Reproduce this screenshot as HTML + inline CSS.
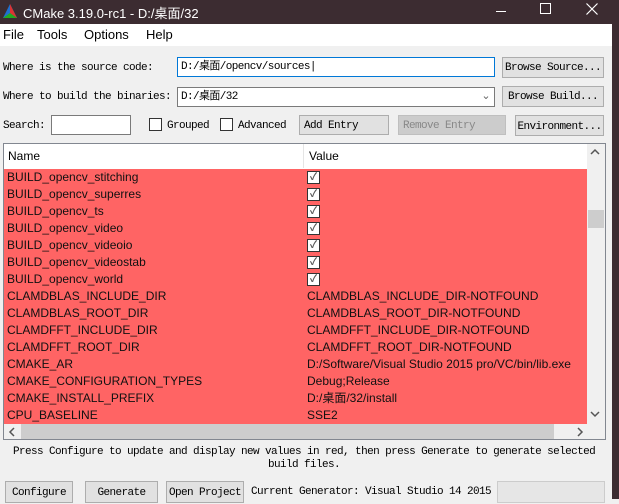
<!DOCTYPE html><html><head><meta charset="utf-8"><style>
*{margin:0;padding:0;box-sizing:border-box}
body{width:619px;height:499px;overflow:hidden;background:#f0f0f0;position:relative;font-family:"Liberation Sans","Noto Sans CJK SC",sans-serif}
.a{position:absolute}
.m{font-family:"Liberation Mono","Noto Sans CJK SC",monospace;font-size:11px;letter-spacing:-0.6px;white-space:nowrap}
.btn{position:absolute;background:#e1e1e1;border:1px solid #adadad;font-family:"Liberation Mono","Noto Sans CJK SC",monospace;font-size:11px;letter-spacing:-0.6px;text-align:center;line-height:20px;white-space:nowrap}
.inp{position:absolute;background:#fff;border:1px solid #7a7a7a;font-family:"Liberation Mono","Noto Sans CJK SC",monospace;font-size:11px;letter-spacing:-0.6px;padding-left:3px;line-height:18px;white-space:nowrap}
.row{position:absolute;left:4px;width:583px;height:17px;background:#ff6464;font-size:12px;line-height:17px;color:#111}
.row span{position:absolute;left:3px}
.row i{position:absolute;left:303px;font-style:normal}
.cb{position:absolute;left:303px;top:2px;width:13px;height:13px;border:1px solid #333;background:#fff;font-size:10px;line-height:11px;text-align:center;color:#555}
</style></head><body>
<div class="a" style="left:0;top:0;width:619px;height:24px;background:#3c2c31"></div>
<svg class="a" style="left:3px;top:4px" width="14" height="14"><polygon points="7,0 0,14 14,14" fill="#1f6fd0"/><polygon points="7,0 7,14 14,14" fill="#d33"/><polygon points="7,9 0,14 14,14" fill="#2a2"/></svg>
<div class="a" style="left:23px;top:3px;color:#fff;font-size:13px">CMake 3.19.0-rc1 - D:/桌面/32</div>
<div class="a" style="left:496px;top:11px;width:10px;height:1px;background:#fff"></div>
<div class="a" style="left:540px;top:3px;width:11px;height:11px;border:1px solid #fff"></div>
<svg class="a" style="left:586px;top:3px" width="12" height="12"><path d="M0.5 0.5L11.5 11.5M11.5 0.5L0.5 11.5" stroke="#fff" stroke-width="1.2"/></svg>
<div class="a" style="left:612px;top:0;width:7px;height:499px;background:#3c2c31"></div>
<div class="a" style="left:0;top:24px;width:612px;height:22px;background:#fff;font-size:13px;line-height:22px">
<span class="a" style="left:3px">File</span><span class="a" style="left:37px">Tools</span><span class="a" style="left:84px">Options</span><span class="a" style="left:146px">Help</span></div>
<div class="a m" style="left:3px;top:62px">Where is the source code:</div>
<div class="inp" style="left:177px;top:57px;width:318px;height:20px;border-color:#0078d7">D:/桌面/opencv/sources|</div>
<div class="btn" style="left:502px;top:57px;width:102px;height:21px">Browse Source...</div>
<div class="a m" style="left:3px;top:91px">Where to build the binaries:</div>
<div class="inp" style="left:177px;top:87px;width:318px;height:20px">D:/桌面/32<span style="position:absolute;right:4px;color:#666">⌄</span></div>
<div class="btn" style="left:502px;top:86px;width:102px;height:21px">Browse Build...</div>
<div class="a m" style="left:3px;top:120px">Search:</div>
<div class="inp" style="left:51px;top:115px;width:80px;height:20px"></div>
<div class="a" style="left:149px;top:118px;width:13px;height:13px;border:1px solid #333;background:#fff"></div>
<div class="a m" style="left:167px;top:120px">Grouped</div>
<div class="a" style="left:220px;top:118px;width:13px;height:13px;border:1px solid #333;background:#fff"></div>
<div class="a m" style="left:238px;top:120px">Advanced</div>
<div class="btn" style="left:299px;top:115px;width:90px;height:20px;text-align:left;padding-left:4px">Add Entry</div>
<div class="btn" style="left:398px;top:115px;width:108px;height:20px;background:#ccc;border-color:#bfbfbf;color:#888;text-align:left;padding-left:4px">Remove Entry</div>
<div class="btn" style="left:515px;top:115px;width:89px;height:21px;line-height:22px">Environment...</div>
<div class="a" style="left:3px;top:143px;width:603px;height:297px;border:1px solid #828790;background:#fff"></div>
<div class="a" style="left:4px;top:144px;width:583px;height:24px;font-size:12px;line-height:24px"><span style="margin-left:4px">Name</span><span style="position:absolute;left:299px;top:0;height:24px;border-left:1px solid #e5e5e5;padding-left:5px">Value</span></div>
<div class="a" style="left:587px;top:144px;width:18px;height:280px;background:#f0f0f0"></div>
<svg class="a" style="left:590px;top:148px" width="10" height="8"><path d="M1 6L5 2L9 6" stroke="#555" stroke-width="1.5" fill="none"/></svg>
<div class="a" style="left:588px;top:210px;width:16px;height:18px;background:#cdcdcd"></div>
<svg class="a" style="left:590px;top:410px" width="10" height="8"><path d="M1 2L5 6L9 2" stroke="#555" stroke-width="1.5" fill="none"/></svg>
<div class="a" style="left:4px;top:424px;width:601px;height:15px;background:#f0f0f0"></div>
<div class="a" style="left:21px;top:424px;width:533px;height:15px;background:#cdcdcd"></div>
<svg class="a" style="left:8px;top:427px" width="8" height="10"><path d="M6 1L2 5L6 9" stroke="#555" stroke-width="1.5" fill="none"/></svg>
<svg class="a" style="left:576px;top:427px" width="8" height="10"><path d="M2 1L6 5L2 9" stroke="#555" stroke-width="1.5" fill="none"/></svg>
<div class="row" style="top:169px"><span>BUILD_opencv_stitching</span><b class="cb">✓</b></div>
<div class="row" style="top:186px"><span>BUILD_opencv_superres</span><b class="cb">✓</b></div>
<div class="row" style="top:203px"><span>BUILD_opencv_ts</span><b class="cb">✓</b></div>
<div class="row" style="top:220px"><span>BUILD_opencv_video</span><b class="cb">✓</b></div>
<div class="row" style="top:237px"><span>BUILD_opencv_videoio</span><b class="cb">✓</b></div>
<div class="row" style="top:254px"><span>BUILD_opencv_videostab</span><b class="cb">✓</b></div>
<div class="row" style="top:271px"><span>BUILD_opencv_world</span><b class="cb">✓</b></div>
<div class="row" style="top:288px"><span>CLAMDBLAS_INCLUDE_DIR</span><i>CLAMDBLAS_INCLUDE_DIR-NOTFOUND</i></div>
<div class="row" style="top:305px"><span>CLAMDBLAS_ROOT_DIR</span><i>CLAMDBLAS_ROOT_DIR-NOTFOUND</i></div>
<div class="row" style="top:322px"><span>CLAMDFFT_INCLUDE_DIR</span><i>CLAMDFFT_INCLUDE_DIR-NOTFOUND</i></div>
<div class="row" style="top:339px"><span>CLAMDFFT_ROOT_DIR</span><i>CLAMDFFT_ROOT_DIR-NOTFOUND</i></div>
<div class="row" style="top:356px;overflow:hidden"><span>CMAKE_AR</span><i style="white-space:nowrap">D:/Software/Visual Studio 2015 pro/VC/bin/lib.exe</i></div>
<div class="row" style="top:373px"><span>CMAKE_CONFIGURATION_TYPES</span><i>Debug;Release</i></div>
<div class="row" style="top:390px"><span>CMAKE_INSTALL_PREFIX</span><i>D:/桌面/32/install</i></div>
<div class="row" style="top:407px"><span>CPU_BASELINE</span><i>SSE2</i></div>
<div class="a m" style="left:13px;top:446px">Press Configure to update and display new values in red, then press Generate to generate selected</div>
<div class="a m" style="left:268px;top:459px">build files.</div>
<div class="btn" style="left:5px;top:481px;width:68px;height:22px;line-height:22px">Configure</div>
<div class="btn" style="left:85px;top:481px;width:73px;height:22px;line-height:22px">Generate</div>
<div class="btn" style="left:166px;top:481px;width:78px;height:22px;line-height:22px">Open Project</div>
<div class="a m" style="left:251px;top:486px">Current Generator: Visual Studio 14 2015</div>
<div class="a" style="left:497px;top:481px;width:108px;height:22px;border:1px solid #ccc;background:#e6e6e6"></div>
</body></html>
